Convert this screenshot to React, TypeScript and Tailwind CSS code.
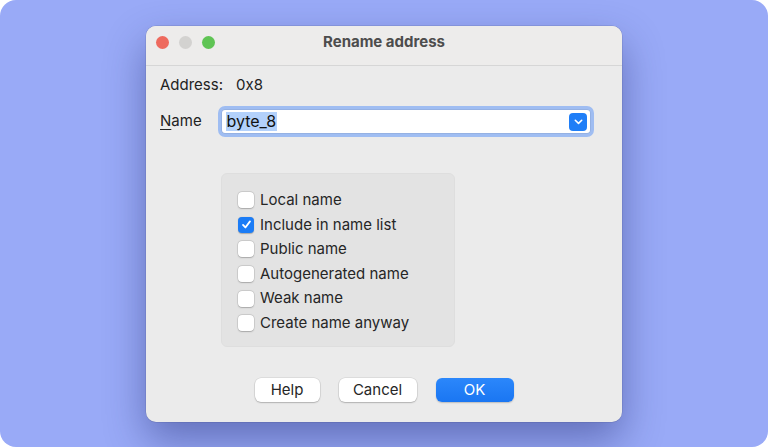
import React from "react";

const font = { fontFamily: "Inter, 'Noto Sans', 'Liberation Sans', sans-serif" };

function Checkbox({ checked }: { checked?: boolean }) {
  if (checked) {
    return (
      <span className="flex h-4 w-4 shrink-0 items-center justify-center rounded-[4px] bg-[#1b7cf6] shadow-[0_0.5px_1px_rgba(0,0,0,0.25)]">
        <svg width="11" height="11" viewBox="0 0 12 12" fill="none">
          <path d="M2.2 6.4 L4.8 9.2 L9.8 2.6" stroke="white" strokeWidth="2" strokeLinecap="round" strokeLinejoin="round" />
        </svg>
      </span>
    );
  }
  return (
    <span className="h-4 w-4 shrink-0 rounded-[4px] bg-white shadow-[0_0_0_0.5px_rgba(0,0,0,0.15),0_0.5px_1.5px_rgba(0,0,0,0.2)]" />
  );
}

const items = [
  { label: "Local name" },
  { label: "Include in name list", checked: true },
  { label: "Public name" },
  { label: "Autogenerated name" },
  { label: "Weak name" },
  { label: "Create name anyway" },
];

export default function App() {
  return (
    <div className="h-[447px] w-[768px] bg-white" style={font}>
      <div className="flex h-full w-full items-start justify-center rounded-[16px] bg-[#99aaf7] pt-[26px]">
        <div className="flex h-[396px] w-[476px] flex-col overflow-hidden rounded-[10px] bg-[#ebebeb] shadow-[0_18px_40px_rgba(30,40,110,0.45),0_0_0_0.5px_rgba(0,0,0,0.15)]">
          {/* title bar */}
          <div className="relative h-[40px] border-b border-[#d6d6d6] bg-[#edeceb]">
            <div className="relative flex h-[32px] items-center">
              <div className="flex items-center gap-[10px] pl-[10px]">
                <span className="h-[13px] w-[13px] rounded-full bg-[#ee6a5e]" />
                <span className="h-[13px] w-[13px] rounded-full bg-[#d3d2d0]" />
                <span className="h-[13px] w-[13px] rounded-full bg-[#5fc454]" />
              </div>
              <div className="absolute inset-0 flex items-center justify-center text-[15px] font-bold text-[#4d4d4d]">
                Rename address
              </div>
            </div>
          </div>

          {/* content */}
          <div className="flex flex-1 flex-col px-[14px]">
            <div className="mt-[10px] flex h-[18px] items-center text-[15px] text-[#222]">
              <span className="w-[76px]">Address:</span>
              <span>0x8</span>
            </div>

            <div className="mt-[12px] flex items-center text-[15px] text-[#222]">
              <span className="w-[58px]">
                <span className="underline decoration-1 underline-offset-[3px]">N</span>ame
              </span>
              <div className="flex h-[31px] w-[376px] items-center rounded-[7px] bg-[#9fbdf2] p-[4px]">
                <div className="flex h-[23px] flex-1 items-center rounded-[3px] bg-white pl-[4px] pr-[3px] shadow-[0_0_0_0.5px_rgba(0,0,0,0.12)]">
                  <span className="bg-[#b3d1fb] px-[0.5px] text-[16px] leading-[19px] text-[#111]">byte_8</span>
                  <span className="flex-1" />
                  <span className="flex h-[18px] w-[18px] items-center justify-center rounded-[4px] bg-[#1f7ef7]">
                    <svg width="9" height="6" viewBox="0 0 9 6" fill="none">
                      <path d="M1.3 1.3 L4.5 4.4 L7.7 1.3" stroke="white" strokeWidth="1.6" strokeLinecap="round" strokeLinejoin="round" />
                    </svg>
                  </span>
                </div>
              </div>
            </div>

            <div className="mt-[36px] ml-[61px] flex h-[174px] w-[234px] flex-col rounded-[6px] border border-[#dedede] bg-[#e3e3e3] pl-[16px] pt-[14px]">
              {items.map((it) => (
                <div key={it.label} className="flex h-[24.6px] items-center gap-[6px] text-[15px] text-[#262626]">
                  <Checkbox checked={it.checked} />
                  <span className="whitespace-nowrap">{it.label}</span>
                </div>
              ))}
            </div>

            <div className="mt-[31px] flex items-center justify-center gap-[19px] text-[15px]">
              <button className="h-[24px] w-[65px] rounded-[6px] bg-white text-[#262626] shadow-[0_0_0_0.5px_rgba(0,0,0,0.12),0_1px_1.5px_rgba(0,0,0,0.2)]">
                Help
              </button>
              <button className="h-[24px] w-[78px] rounded-[6px] bg-white text-[#262626] shadow-[0_0_0_0.5px_rgba(0,0,0,0.12),0_1px_1.5px_rgba(0,0,0,0.2)]">
                Cancel
              </button>
              <button className="h-[24px] w-[78px] rounded-[6px] bg-gradient-to-b from-[#2b87fb] to-[#1a76f2] text-white shadow-[0_1px_1.5px_rgba(0,0,0,0.2)]">
                OK
              </button>
            </div>
          </div>
        </div>
      </div>
    </div>
  );
}
